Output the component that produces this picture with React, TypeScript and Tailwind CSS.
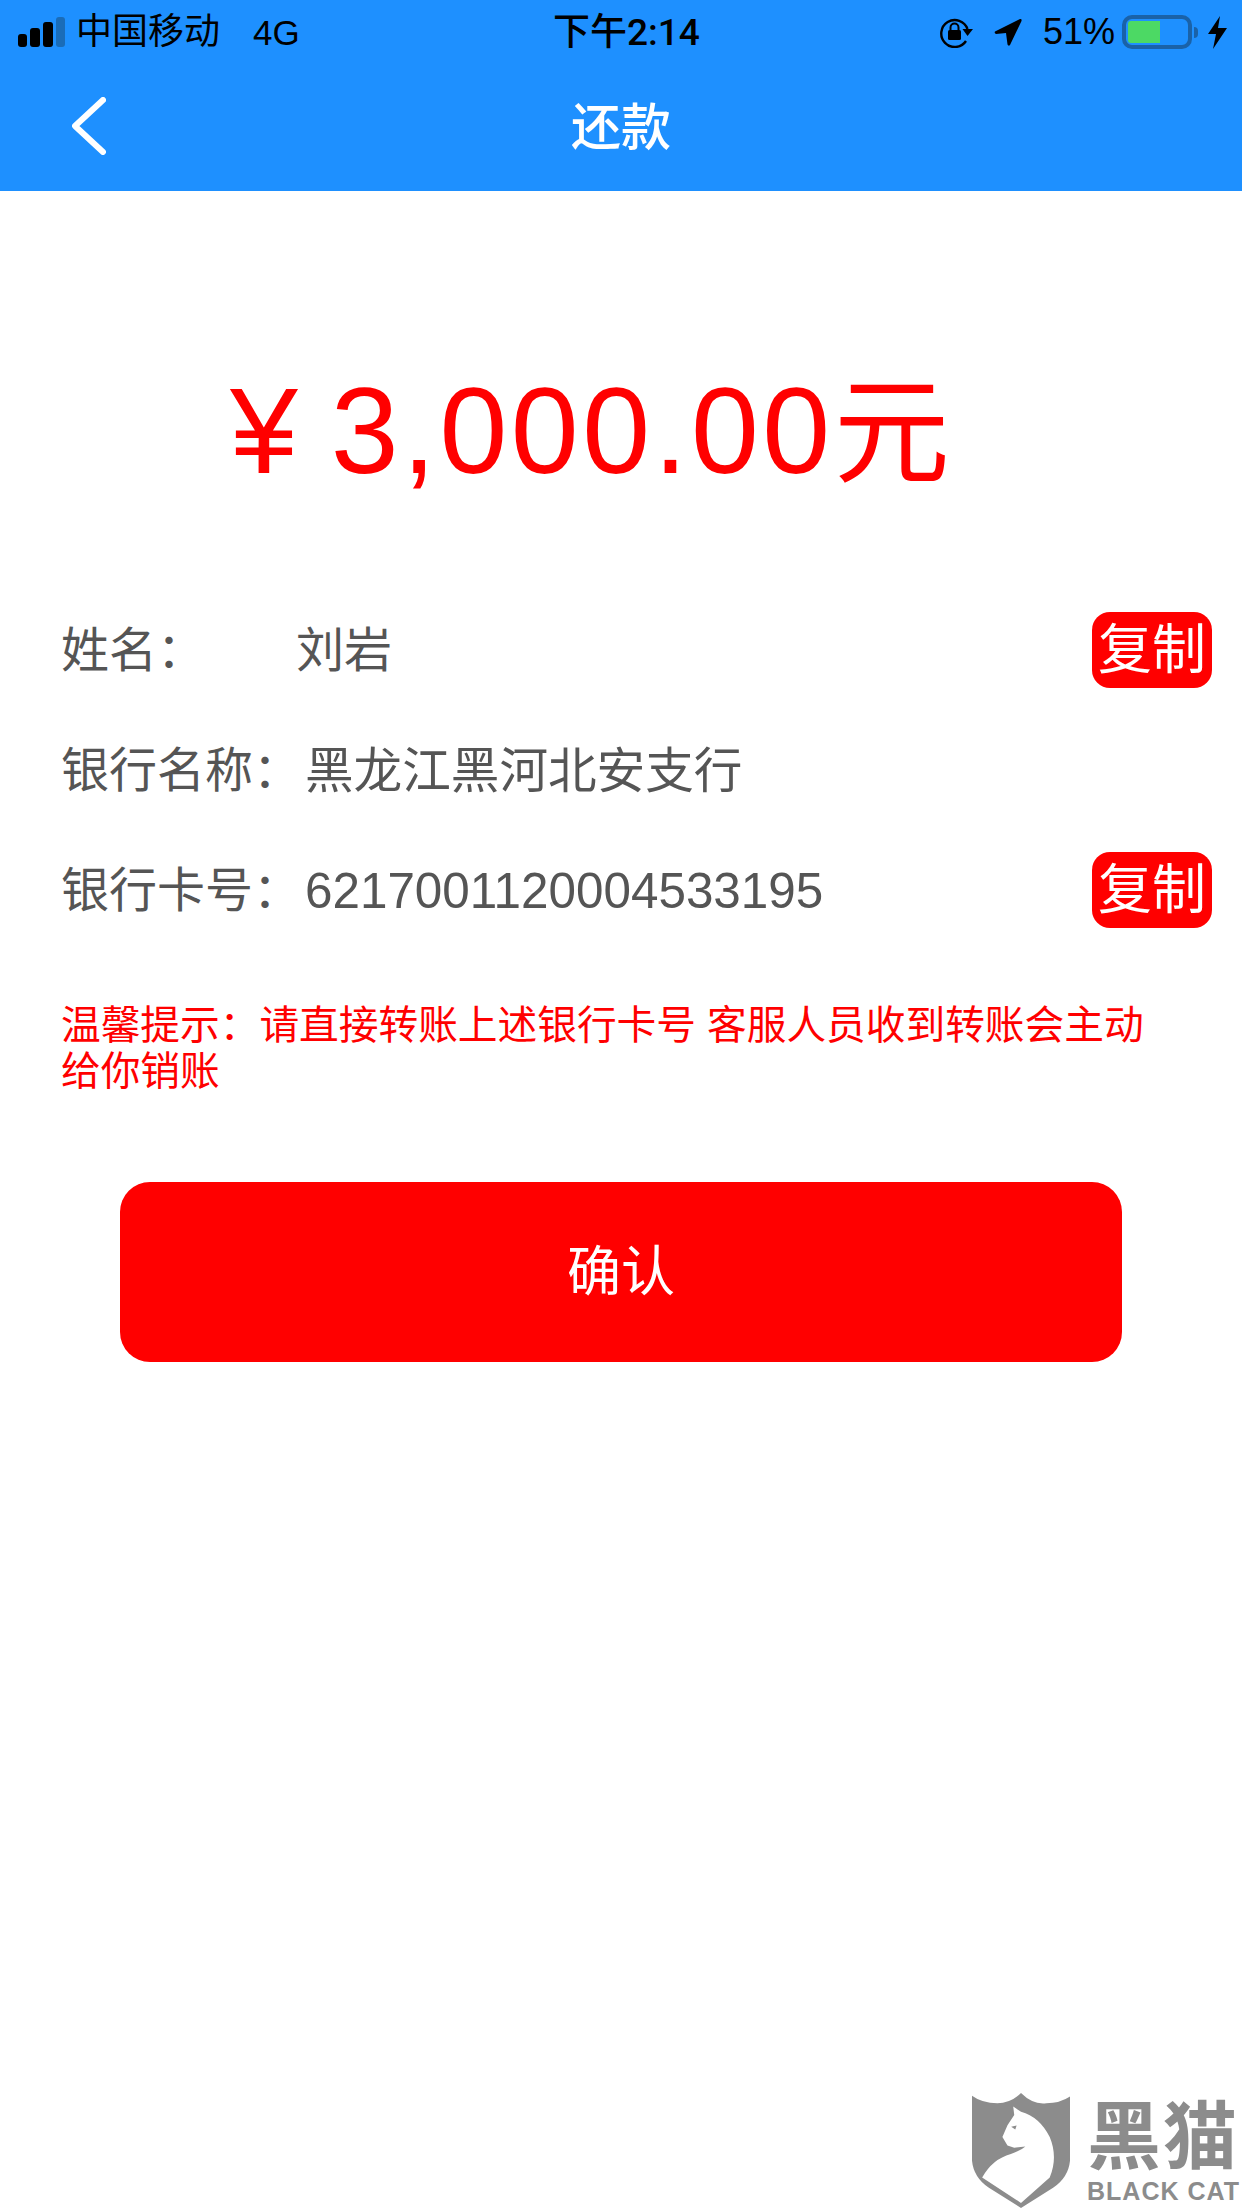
const CJK = 'font-["Liberation_Sans","Noto_Sans_CJK_SC",sans-serif]'

function SignalBars() {
  return (
    <div className="flex items-end gap-[3px] w-[48px] h-[30px]">
      <span className="w-[9px] h-[13px] rounded-[3px] bg-black" />
      <span className="w-[10px] h-[19px] rounded-[3px] bg-black" />
      <span className="w-[10px] h-[25px] rounded-[3px] bg-black" />
      <span className="w-[9px] h-[30px] rounded-[3px] bg-[#1a6cb8]" />
    </div>
  )
}

function RotationLock() {
  return (
    <svg width="35" height="31" viewBox="0 0 35 31">
      <path d="M27 24 A13.5 13.5 0 1 1 28.5 12" fill="none" stroke="#000" strokeWidth="2.4" />
      <path d="M23.5 12 L34 12 L28.5 19 Z" fill="#000" />
      <rect x="9" y="13" width="13" height="10" rx="1.5" fill="#000" />
      <path d="M11.5 13 V10.5 A4 4 0 0 1 19.5 10.5 V13" fill="none" stroke="#000" strokeWidth="2" />
    </svg>
  )
}

function LocationArrow() {
  return (
    <svg width="28" height="28" viewBox="0 0 28 28">
      <path d="M1 13.5 L26 1 Q28 0.5 27.5 3 L16 27 Q14.5 28.5 13.5 26.5 L12 15 L2 16 Q0 15 1 13.5 Z" fill="#000" />
    </svg>
  )
}

function Battery() {
  return (
    <div className="flex items-center">
      <div className="w-[70px] h-[34px] rounded-[10px] border-[4px] border-[#1a62a8] p-[2px]">
        <div className="w-[32px] h-full bg-[#4cd964] rounded-l-[3px]" />
      </div>
      <span className="w-[4px] h-[11px] ml-[2px] rounded-r-[4px] bg-[#1a62a8]" />
    </div>
  )
}

function Bolt() {
  return (
    <svg width="19" height="33" viewBox="0 0 19 33">
      <path d="M12 0 L0 18 L8 18 L5 33 L19 12 L10 12 Z" fill="#000" />
    </svg>
  )
}

function StatusBar() {
  return (
    <div className={`relative h-[64px] flex items-center text-black ${CJK}`}>
      <div className="flex items-center pl-[18px]">
        <SignalBars />
        <span className="ml-[10px] text-[36px] leading-none">中国移动</span>
        <span className="ml-[33px] text-[35px] leading-none">4G</span>
      </div>
      <span className='absolute left-[553px] text-[37px] leading-none font-medium font-["Roboto","Noto_Sans_CJK_SC",sans-serif]'>下午2:14</span>
      <div className="ml-auto flex items-center pr-[15px]">
        <RotationLock />
        <span className="ml-[20px] flex"><LocationArrow /></span>
        <span className="ml-[21px] text-[36px] leading-none">51%</span>
        <span className="ml-[7px] flex"><Battery /></span>
        <span className="ml-[10px] flex"><Bolt /></span>
      </div>
    </div>
  )
}

function NavBar() {
  return (
    <div className="relative h-[127px] flex items-center justify-center">
      <svg className="absolute left-[72px] top-[33px]" width="34" height="58" viewBox="0 0 34 58">
        <path d="M31 3 L3 29 L31 55" fill="none" stroke="#fff" strokeWidth="6" strokeLinecap="round" strokeLinejoin="round" />
      </svg>
      <span className={`text-white text-[50px] leading-none font-medium ${CJK}`}>还款</span>
    </div>
  )
}

function CopyButton() {
  return (
    <button className="ml-auto mb-[2px] w-[120px] h-[76px] rounded-[18px] bg-[#ff0000] text-white text-[54px] leading-none flex items-center justify-center whitespace-nowrap">
      复制
    </button>
  )
}

const ROWS = [
  { label: '姓名：', labelWidth: 'w-[235px]', value: '刘岩', valueSize: 'text-[48px]', copy: true },
  { label: '银行名称：', labelWidth: 'w-[244px]', value: '黑龙江黑河北安支行', valueSize: 'text-[48.6px]', copy: false },
  { label: '银行卡号：', labelWidth: 'w-[244px]', value: '6217001120004533195', valueSize: 'text-[49.4px]', copy: true },
]

function BlackCatMark() {
  return (
    <div className="absolute right-[3px] bottom-0 flex items-end gap-[17px] text-[#8c8c8c]">
      <svg width="98" height="115" viewBox="100 70 290 340">
        <path d="M245 70 Q280 105 320 100 Q360 100 390 80 L390 270 Q385 320 340 350 L245 410 L150 350 Q105 320 100 270 L100 78 Q130 100 175 100 Q215 100 245 70 Z" fill="#8c8c8c" />
        <path d="M222 110 L245 125 Q300 140 330 200 Q355 260 330 320 L245 395 L130 320 Q160 265 215 250 Q245 240 258 228 L225 232 L205 225 L190 200 L205 165 L225 135 Z" fill="#fff" />
        <path d="M216 170 L232 166 L228 178 Z" fill="#8c8c8c" />
      </svg>
      <div className="flex flex-col items-start w-[152px] mb-[3px]">
        <span className={`text-[74px] leading-[78px] font-bold tracking-[2px] whitespace-nowrap ${CJK}`}>黑猫</span>
        <span className='text-[25px] leading-[28px] font-bold tracking-[1px] font-["Liberation_Sans",sans-serif] whitespace-nowrap'>BLACK CAT</span>
      </div>
    </div>
  )
}

/** Repayment page: amount, payee details and a confirm button. */
export default function App() {
  return (
    <div className={`relative w-[1242px] h-[2208px] bg-white overflow-hidden ${CJK}`}>
      <div className="bg-[#1e90ff]">
        <StatusBar />
        <NavBar />
      </div>

      {/* Amount */}
      <div className="h-[400px] pl-[230px] pt-[170px] text-[#ff0000] text-[122px] leading-[140px] tracking-[3.5px] [word-spacing:-8px] whitespace-nowrap">
        ¥ 3,000.00<span className="text-[116px] tracking-normal">元</span>
      </div>

      {/* Details */}
      <div className="pl-[61px] pr-[30px] text-[#555555] text-[48px]">
        {ROWS.map((row) => (
          <div key={row.label} className="h-[120px] flex items-center">
            <span className={`${row.labelWidth} leading-none whitespace-nowrap`}>{row.label}</span>
            <span className={`${row.valueSize} leading-none whitespace-nowrap`}>{row.value}</span>
            {row.copy && <CopyButton />}
          </div>
        ))}
      </div>

      {/* Notice */}
      <p className="mt-[51px] pl-[61px] pr-[62px] text-[#ff0000] text-[39.7px] leading-[46px]">
        温馨提示：请直接转账上述银行卡号 客服人员收到转账会主动给你销账
      </p>

      <div className="mt-[88px] px-[120px]">
        <button className="w-full h-[180px] rounded-[30px] bg-[#ff0000] text-white text-[54px] leading-none">确认</button>
      </div>

      <BlackCatMark />
    </div>
  )
}
